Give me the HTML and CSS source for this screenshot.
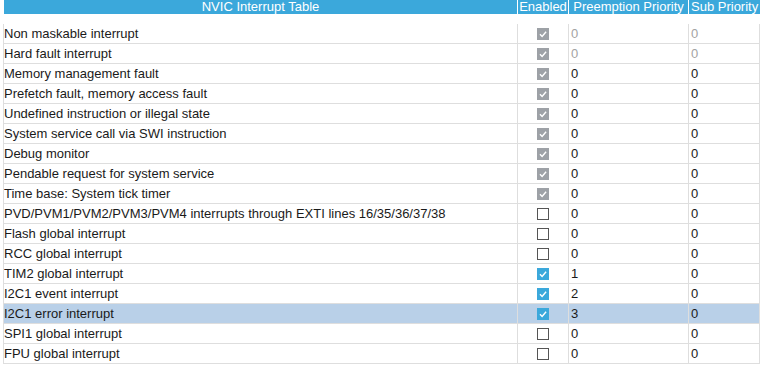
FILE: index.html
```html
<!DOCTYPE html>
<html lang="en">
<head>
  <meta charset="UTF-8">
  <title>NVIC Interrupt Table</title>
  <link rel="stylesheet" href="styles.css">
</head>
<body>

  <div class="nvic">
    <div class="head">
      <div class="hcell">NVIC Interrupt Table</div>
      <div class="hcell">Enabled</div>
      <div class="hcell">Preemption Priority</div>
      <div class="hcell sub">Sub Priority</div>
    </div>
    <div class="spacer"></div>
    <div id="rows"></div>
  </div>

  <script>
    // state: lock = forced on (grey), on = enabled, off = disabled
    const interrupts = [
      ['Non maskable interrupt', 'lock', 0, 0, true],
      ['Hard fault interrupt', 'lock', 0, 0, true],
      ['Memory management fault', 'lock', 0, 0],
      ['Prefetch fault, memory access fault', 'lock', 0, 0],
      ['Undefined instruction or illegal state', 'lock', 0, 0],
      ['System service call via SWI instruction', 'lock', 0, 0],
      ['Debug monitor', 'lock', 0, 0],
      ['Pendable request for system service', 'lock', 0, 0],
      ['Time base: System tick timer', 'lock', 0, 0],
      ['PVD/PVM1/PVM2/PVM3/PVM4 interrupts through EXTI lines 16/35/36/37/38', 'off', 0, 0],
      ['Flash global interrupt', 'off', 0, 0],
      ['RCC global interrupt', 'off', 0, 0],
      ['TIM2 global interrupt', 'on', 1, 0],
      ['I2C1 event interrupt', 'on', 2, 0],
      ['I2C1 error interrupt', 'on', 3, 0],
      ['SPI1 global interrupt', 'off', 0, 0],
      ['FPU global interrupt', 'off', 0, 0]
    ];
    const selected = 'I2C1 error interrupt';
    const check = '<svg viewBox="0 0 12 12" width="12" height="12"><path d="M3 6.3l2.1 2.1 4-4.6" fill="none" stroke="#fff" stroke-width="1.4"/></svg>';

    const rows = document.getElementById('rows');
    interrupts.forEach(([name, state, prio, sub, dim]) => {
      const row = document.createElement('div');
      row.className = 'row' + (name === selected ? ' selected' : '') + (dim ? ' dim' : '');
      row.innerHTML = `
        <div class="cell name">${name}</div>
        <div class="cell box"><span class="cb ${state}">${state === 'off' ? '' : check}</span></div>
        <div class="cell num">${prio}</div>
        <div class="cell num">${sub}</div>`;
      rows.appendChild(row);
    });
  </script>
</body>
</html>
```

FILE: styles.css
```css
body {
  margin: 0;
  font-family: "Liberation Sans", Arial, sans-serif;
  font-size: 13px;
  color: #1a1a1a;
  background: #fff;
  overflow: hidden;
}

.nvic {
  margin-left: 3px;
}

.head {
  display: grid;
  grid-template-columns: 513px 50px 119px 1fr;
  column-gap: 1px;
  margin-left: 1px;
  height: 14px;
  line-height: 14px;
}

.hcell {
  background-color: #3ba8db;
  color: #fff;
  text-align: center;
  white-space: nowrap;
  overflow: hidden;
}

.hcell.sub {
  text-align: left;
  padding-left: 2px;
}

.spacer {
  height: 10px;
}

.row {
  display: grid;
  grid-template-columns: 514px 51px 120px 1fr;
  height: 19px;
  border-left: 1px solid #dedede;
  border-bottom: 1px solid #dedede;
}

.row.selected { background-color: #b9d0e8; }

.cell {
  box-sizing: border-box;
  height: 19px;
  padding-top: 1px;
  line-height: 18px;
  border-right: 1px solid #dedede;
  white-space: nowrap;
  overflow: hidden;
}

.cell.num { padding-left: 2px; }
.row.dim .num { color: #a3a3a3; }

.cell.box {
  padding-top: 0;
  display: flex;
  align-items: center;
  justify-content: center;
}

.cb {
  box-sizing: border-box;
  display: block;
  width: 12px;
  height: 12px;
}

.cb svg { display: block; }
.cb.lock { background-color: #9da1a6; }
.cb.on { background-color: #3ba8db; }
.cb.off { border: 1px solid #555; background-color: #fff; }
```
